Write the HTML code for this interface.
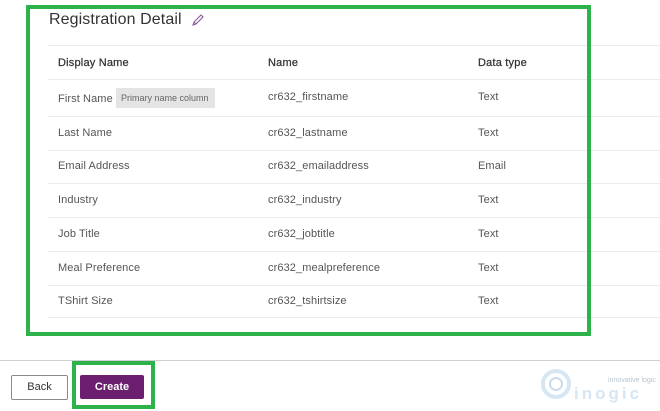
<!DOCTYPE html>
<html><head><meta charset="utf-8"><style>
*{margin:0;padding:0;box-sizing:border-box}
body{width:660px;height:411px;background:#fff;font-family:"Liberation Sans",sans-serif;position:relative;overflow:hidden}
.a{position:absolute;white-space:nowrap}
.line{position:absolute;left:48px;right:0;height:1px;background:#ececec}
.c{position:absolute;font-size:11px;color:#555;letter-spacing:0.1px}
.h{position:absolute;font-size:11px;color:#333;font-weight:normal;letter-spacing:0.2px;-webkit-text-stroke:0.25px #333}
</style></head><body>
<div class="a" style="left:26px;top:5px;width:565px;height:331px;border:4px solid #2db34a;z-index:5"></div>
<div class="a" style="left:49px;top:11px;font-size:16px;color:#333;letter-spacing:0.1px">Registration Detail</div>
<svg class="a" style="left:191px;top:13px" width="14" height="14" viewBox="0 0 14 14"><path d="M2 12 L3 9 L10 2 L12 4 L5 11 Z M3 9 L5 11" fill="none" stroke="#8a5a9a" stroke-width="1.1"/></svg>
<div class="line" style="top:45px"></div>
<div class="h" style="left:58px;top:57px">Display Name</div>
<div class="h" style="left:268px;top:57px">Name</div>
<div class="h" style="left:478px;top:57px">Data type</div>
<div class="line" style="top:79px"></div>
<div class="c" style="left:58px;top:93px">First Name</div>
<div class="a" style="left:116px;top:88px;width:99px;height:20px;background:#e4e4e4;font-size:9px;color:#666;line-height:20px;padding-left:5px">Primary name column</div>
<div class="c" style="left:268px;top:91px">cr632_firstname</div>
<div class="c" style="left:478px;top:91px">Text</div>
<div class="line" style="top:116px"></div>
<div class="c" style="left:58px;top:127px">Last Name</div><div class="c" style="left:268px;top:127px">cr632_lastname</div><div class="c" style="left:478px;top:127px">Text</div>
<div class="line" style="top:150px"></div>
<div class="c" style="left:58px;top:160px">Email Address</div><div class="c" style="left:268px;top:160px">cr632_emailaddress</div><div class="c" style="left:478px;top:160px">Email</div>
<div class="line" style="top:183px"></div>
<div class="c" style="left:58px;top:194px">Industry</div><div class="c" style="left:268px;top:194px">cr632_industry</div><div class="c" style="left:478px;top:194px">Text</div>
<div class="line" style="top:217px"></div>
<div class="c" style="left:58px;top:228px">Job Title</div><div class="c" style="left:268px;top:228px">cr632_jobtitle</div><div class="c" style="left:478px;top:228px">Text</div>
<div class="line" style="top:251px"></div>
<div class="c" style="left:58px;top:262px">Meal Preference</div><div class="c" style="left:268px;top:262px">cr632_mealpreference</div><div class="c" style="left:478px;top:262px">Text</div>
<div class="line" style="top:285px"></div>
<div class="c" style="left:58px;top:295px">TShirt Size</div><div class="c" style="left:268px;top:295px">cr632_tshirtsize</div><div class="c" style="left:478px;top:295px">Text</div>
<div class="line" style="top:317px"></div>
<div class="a" style="left:0;right:0;top:360px;height:1px;background:#d0d0d0"></div>
<div class="a" style="left:11px;top:375px;width:57px;height:25px;border:1px solid #8a8a8a;border-radius:2px;font-size:11px;color:#333;text-align:center;line-height:23px">Back</div>
<div class="a" style="left:72px;top:361px;width:83px;height:48px;border:4px solid #2db34a"></div>
<div class="a" style="left:80px;top:375px;width:64px;height:24px;background:#6b1f6e;border-radius:2px;font-size:11px;color:#fff;font-weight:bold;text-align:center;line-height:24px">Create</div>
<svg class="a" style="left:540px;top:365px" width="120" height="40" viewBox="0 0 120 40">
<circle cx="16" cy="19" r="13" fill="none" stroke="#d6e6f3" stroke-width="4"/>
<circle cx="16" cy="19" r="6" fill="none" stroke="#c8dced" stroke-width="2"/>
<text x="68" y="17" font-size="7" fill="#b8c4cf" font-family="Liberation Sans">innovative logic</text>
<text x="34" y="34" font-size="17" fill="#d6e6f3" font-family="Liberation Sans" font-weight="bold" letter-spacing="3">inogic</text>
</svg>
</body></html>
